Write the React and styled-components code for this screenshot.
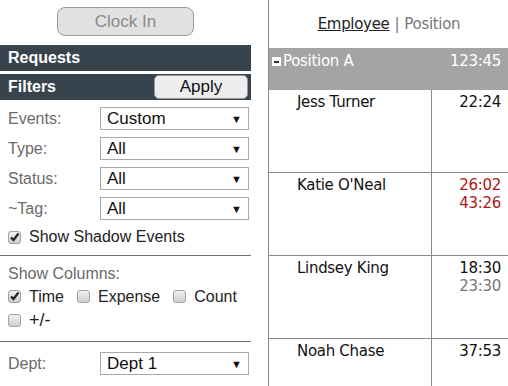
import React from 'react';
import styled, { createGlobalStyle } from 'styled-components';

const Global = createGlobalStyle`
  html, body { margin: 0; padding: 0; background: #fff; }
  body { font-family: "Liberation Sans", Arial, sans-serif; }
`;

const Page = styled.div`
  width: 508px;
  height: 386px;
  display: flex;
  overflow: hidden;
`;

const Sidebar = styled.div`
  width: 251px;
  flex: none;
  display: flex;
  flex-direction: column;
  font-family: "Liberation Sans", Arial, sans-serif;
`;

const ClockRow = styled.div`
  display: flex;
  justify-content: center;
  padding-top: 7px;
  margin-bottom: 9px;
`;

const ClockButton = styled.div`
  width: 135px;
  height: 27px;
  border: 1px solid #9a9a9a;
  border-radius: 8px;
  background: #e1e1e1;
  color: #8a8a8a;
  font-size: 17px;
  display: flex;
  align-items: center;
  justify-content: center;
`;

const Bar = styled.div`
  height: 26px;
  background: #38444d;
  color: #fff;
  font-weight: bold;
  font-size: 16px;
  display: flex;
  align-items: center;
  justify-content: space-between;
  padding-left: 8px;
  margin-top: ${(p) => p.$gap || 0}px;
  box-sizing: border-box;
`;

const ApplyButton = styled.div`
  width: 92px;
  height: 22px;
  margin-right: 3px;
  background: #eeeeee;
  border: 1px solid #999;
  border-radius: 5px;
  color: #111;
  font-weight: normal;
  font-size: 17px;
  display: flex;
  align-items: center;
  justify-content: center;
`;

const Filters = styled.div`
  display: flex;
  flex-direction: column;
  gap: 7px;
  padding-top: ${(p) => p.$pt ?? 7}px;
`;

const FieldRow = styled.div`
  display: flex;
  align-items: center;
  height: 23px;
`;

const Label = styled.div`
  width: 100px;
  padding-left: 8px;
  box-sizing: border-box;
  color: #6a6a6a;
  font-size: 16px;
`;

const Select = styled.div`
  width: 149px;
  height: 23px;
  box-sizing: border-box;
  border: 1px solid #a9a9a9;
  display: flex;
  align-items: center;
  justify-content: space-between;
  padding: 0 6px 0 6px;
  font-size: 17px;
  color: #111;

  &::after {
    content: "▼";
    font-size: 11px;
    color: #111;
  }
`;

const CheckRow = styled.div`
  display: flex;
  align-items: center;
  gap: ${(p) => p.$gap || 0}px;
  padding-left: 8px;
  height: ${(p) => p.$h || 22}px;
  margin-top: ${(p) => p.$mt || 0}px;
`;

const CheckItem = styled.label`
  display: flex;
  align-items: center;
  gap: 8px;
  font-size: ${(p) => p.$size || 16}px;
  color: #222;
`;

const Box = styled.span`
  width: 11px;
  height: 11px;
  border: 1px solid #a0a0a0;
  border-radius: 3px;
  background: linear-gradient(#f2f2f2, #cfcfcf);
  position: relative;
  flex: none;
`;

const Rule = styled.div`
  height: 1px;
  background: #6e6e6e;
  margin-top: ${(p) => p.$mt || 0}px;
`;

const SectionTitle = styled.div`
  padding-left: 8px;
  margin-top: 9px;
  font-size: 16px;
  color: #6a6a6a;
  height: 19px;
`;

const Check = ({ checked }) => (
  <Box>
    {checked && (
      <svg width="11" height="11" viewBox="0 0 11 11" style={{ position: 'absolute', left: 0, top: 0 }}>
        <path d="M2 5.5 L4.5 8 L9.5 1.5" stroke="#222" strokeWidth="2.2" fill="none" />
      </svg>
    )}
  </Box>
);

const Main = styled.div`
  width: 240px;
  height: 386px;
  flex: none;
  margin-left: 17px;
  border-left: 1px solid #8a8a8a;
  font-family: "DejaVu Sans", Verdana, sans-serif;
  display: flex;
  flex-direction: column;
  overflow: hidden;
`;

const Toggle = styled.div`
  height: 48px;
  flex: none;
  display: flex;
  align-items: center;
  justify-content: center;
  font-size: 15px;
  letter-spacing: -0.3px;
  color: #777;
  gap: 5px;
`;

const ToggleLink = styled.span`
  color: ${(p) => (p.$active ? '#222' : '#777')};
  text-decoration: ${(p) => (p.$active ? 'underline' : 'none')};
`;

const Group = styled.div`
  height: 42px;
  flex: none;
  background: #a4a4a4;
  color: #fff;
  display: flex;
  justify-content: space-between;
  padding: 4px 7px 0 3px;
  box-sizing: border-box;
  font-size: 15px;
  letter-spacing: -0.3px;
  margin-right: 1px;
`;

const GroupName = styled.div`
  display: flex;
  align-items: flex-start;
  gap: 2px;
  line-height: 18px;
`;

const Minus = styled.span`
  width: 9px;
  height: 9px;
  background: #fff;
  margin-top: 5px;
  display: flex;
  align-items: center;
  justify-content: center;

  &::before {
    content: "";
    width: 5px;
    height: 2px;
    background: #333;
  }
`;

const Row = styled.div`
  height: 82px;
  flex: none;
  display: flex;
  border-bottom: 1px solid #8a8a8a;
  border-right: 1px solid #8a8a8a;
  font-size: 15px;
  letter-spacing: -0.3px;
  color: #111;
`;

const NameCell = styled.div`
  width: 163px;
  padding: 3px 0 0 28px;
  box-sizing: border-box;
  border-right: 1px solid #8a8a8a;
`;

const TimeCell = styled.div`
  flex: 1;
  text-align: right;
  padding: 3px 7px 0 0;
  line-height: 18px;
`;

const Time = styled.div`
  color: ${(p) => p.$color || '#111'};
`;

const rows = [
  { name: 'Jess Turner', times: [['22:24']] },
  { name: "Katie O'Neal", times: [['26:02', '#b01515'], ['43:26', '#b01515']] },
  { name: 'Lindsey King', times: [['18:30'], ['23:30', '#777']] },
  { name: 'Noah Chase', times: [['37:53']] },
];

export default function App() {
  return (
    <Page>
      <Global />
      <Sidebar>
        <ClockRow>
          <ClockButton>Clock In</ClockButton>
        </ClockRow>
        <Bar>Requests</Bar>
        <Bar $gap={3}>
          Filters
          <ApplyButton>Apply</ApplyButton>
        </Bar>
        <Filters>
          <FieldRow>
            <Label>Events:</Label>
            <Select>Custom</Select>
          </FieldRow>
          <FieldRow>
            <Label>Type:</Label>
            <Select>All</Select>
          </FieldRow>
          <FieldRow>
            <Label>Status:</Label>
            <Select>All</Select>
          </FieldRow>
          <FieldRow>
            <Label>~Tag:</Label>
            <Select>All</Select>
          </FieldRow>
        </Filters>
        <CheckRow $mt={6}>
          <CheckItem>
            <Check checked />
            Show Shadow Events
          </CheckItem>
        </CheckRow>
        <Rule $mt={7} />
        <SectionTitle>Show Columns:</SectionTitle>
        <CheckRow $gap={13} $h={25}>
          <CheckItem>
            <Check checked />
            Time
          </CheckItem>
          <CheckItem>
            <Check />
            Expense
          </CheckItem>
          <CheckItem>
            <Check />
            Count
          </CheckItem>
        </CheckRow>
        <CheckRow $h={23}>
          <CheckItem $size={18}>
            <Check />
            +/-
          </CheckItem>
        </CheckRow>
        <Rule $mt={9} />
        <Filters $pt={10}>
          <FieldRow>
            <Label>Dept:</Label>
            <Select>Dept 1</Select>
          </FieldRow>
        </Filters>
      </Sidebar>
      <Main>
        <Toggle>
          <ToggleLink $active>Employee</ToggleLink>|<ToggleLink>Position</ToggleLink>
        </Toggle>
        <Group>
          <GroupName>
            <Minus />
            Position A
          </GroupName>
          <div>123:45</div>
        </Group>
        {rows.map((r) => (
          <Row key={r.name}>
            <NameCell>{r.name}</NameCell>
            <TimeCell>
              {r.times.map(([t, c]) => (
                <Time key={t} $color={c}>
                  {t}
                </Time>
              ))}
            </TimeCell>
          </Row>
        ))}
      </Main>
    </Page>
  );
}
